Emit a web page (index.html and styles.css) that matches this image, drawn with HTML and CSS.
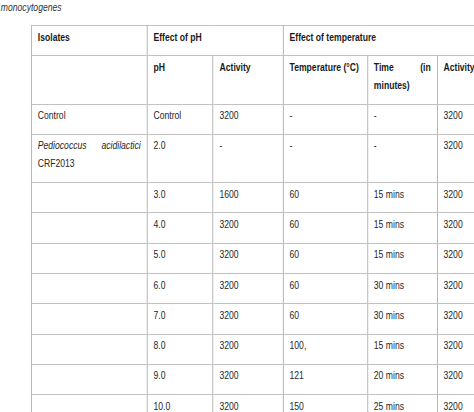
FILE: index.html
```html
<!DOCTYPE html>
<html>
<head>
<meta charset="utf-8">
<link rel="stylesheet" href="styles.css">
</head>
<body>
<div class="sheet">
<div class="caption">monocytogenes</div>
<table class="data">
  <colgroup>
    <col class="c-iso"><col class="c-ph"><col class="c-act"><col class="c-temp"><col class="c-time"><col class="c-act2">
  </colgroup>
  <tr class="head">
    <th>Isolates</th>
    <th colspan="2">Effect of pH</th>
    <th colspan="3">Effect of temperature</th>
  </tr>
  <tr class="head">
    <th></th>
    <th>pH</th>
    <th>Activity</th>
    <th>Temperature (°C)</th>
    <th>Time (in minutes)</th>
    <th>Activity</th>
  </tr>
  <tr><td>Control</td><td>Control</td><td>3200</td><td>-</td><td>-</td><td>3200</td></tr>
  <tr><td><i>Pediococcus acidilactici</i> CRF2013</td><td>2.0</td><td>-</td><td>-</td><td>-</td><td>3200</td></tr>
  <tr><td></td><td>3.0</td><td>1600</td><td>60</td><td>15 mins</td><td>3200</td></tr>
  <tr><td></td><td>4.0</td><td>3200</td><td>60</td><td>15 mins</td><td>3200</td></tr>
  <tr><td></td><td>5.0</td><td>3200</td><td>60</td><td>15 mins</td><td>3200</td></tr>
  <tr><td></td><td>6.0</td><td>3200</td><td>60</td><td>30 mins</td><td>3200</td></tr>
  <tr><td></td><td>7.0</td><td>3200</td><td>60</td><td>30 mins</td><td>3200</td></tr>
  <tr><td></td><td>8.0</td><td>3200</td><td>100,</td><td>15 mins</td><td>3200</td></tr>
  <tr><td></td><td>9.0</td><td>3200</td><td>121</td><td>20 mins</td><td>3200</td></tr>
  <tr><td></td><td>10.0</td><td>3200</td><td>150</td><td>25 mins</td><td>3200</td></tr>
</table>
</div>
</body>
</html>
```
FILE: styles.css
```css
html, body {
  margin: 0;
  padding: 0;
  background: #fff;
  overflow: hidden;
}
body {
  font-family: "Liberation Sans", Arial, sans-serif;
  font-size: 10.5px;
  color: #262626;
  width: 474px;
  height: 412px;
}
/* the source figure uses a narrow face; reproduce it by condensing horizontally */
.sheet {
  width: 620px;
  transform: scaleX(0.82);
  transform-origin: 0 0;
}
.caption {
  font-style: italic;
  line-height: 14px;
  height: 25px;
  padding-left: 1px;
  color: #333;
}
.data {
  margin-left: 37.8px;
  border-collapse: collapse;
  table-layout: fixed;
  width: 580px;
}
.c-iso { width: 141.1px; }
.c-ph { width: 80.5px; }
.c-act { width: 85.4px; }
.c-temp { width: 102.8px; }
.c-time { width: 85px; }
.c-act2 { width: 85.2px; }
.data th, .data td {
  border-top: 1px solid #c2c2c2;
  border-bottom: 1px solid #c2c2c2;
  border-left: 1px solid #a8a8a8;
  border-right: 1px solid #a8a8a8;
  padding: 1.5px 7.3px 9.8px 7.3px;
  line-height: 18px;
  text-align: justify;
  vertical-align: top;
  font-weight: normal;
}
.data th {
  font-weight: bold;
  color: #1a1a1a;
}
```
